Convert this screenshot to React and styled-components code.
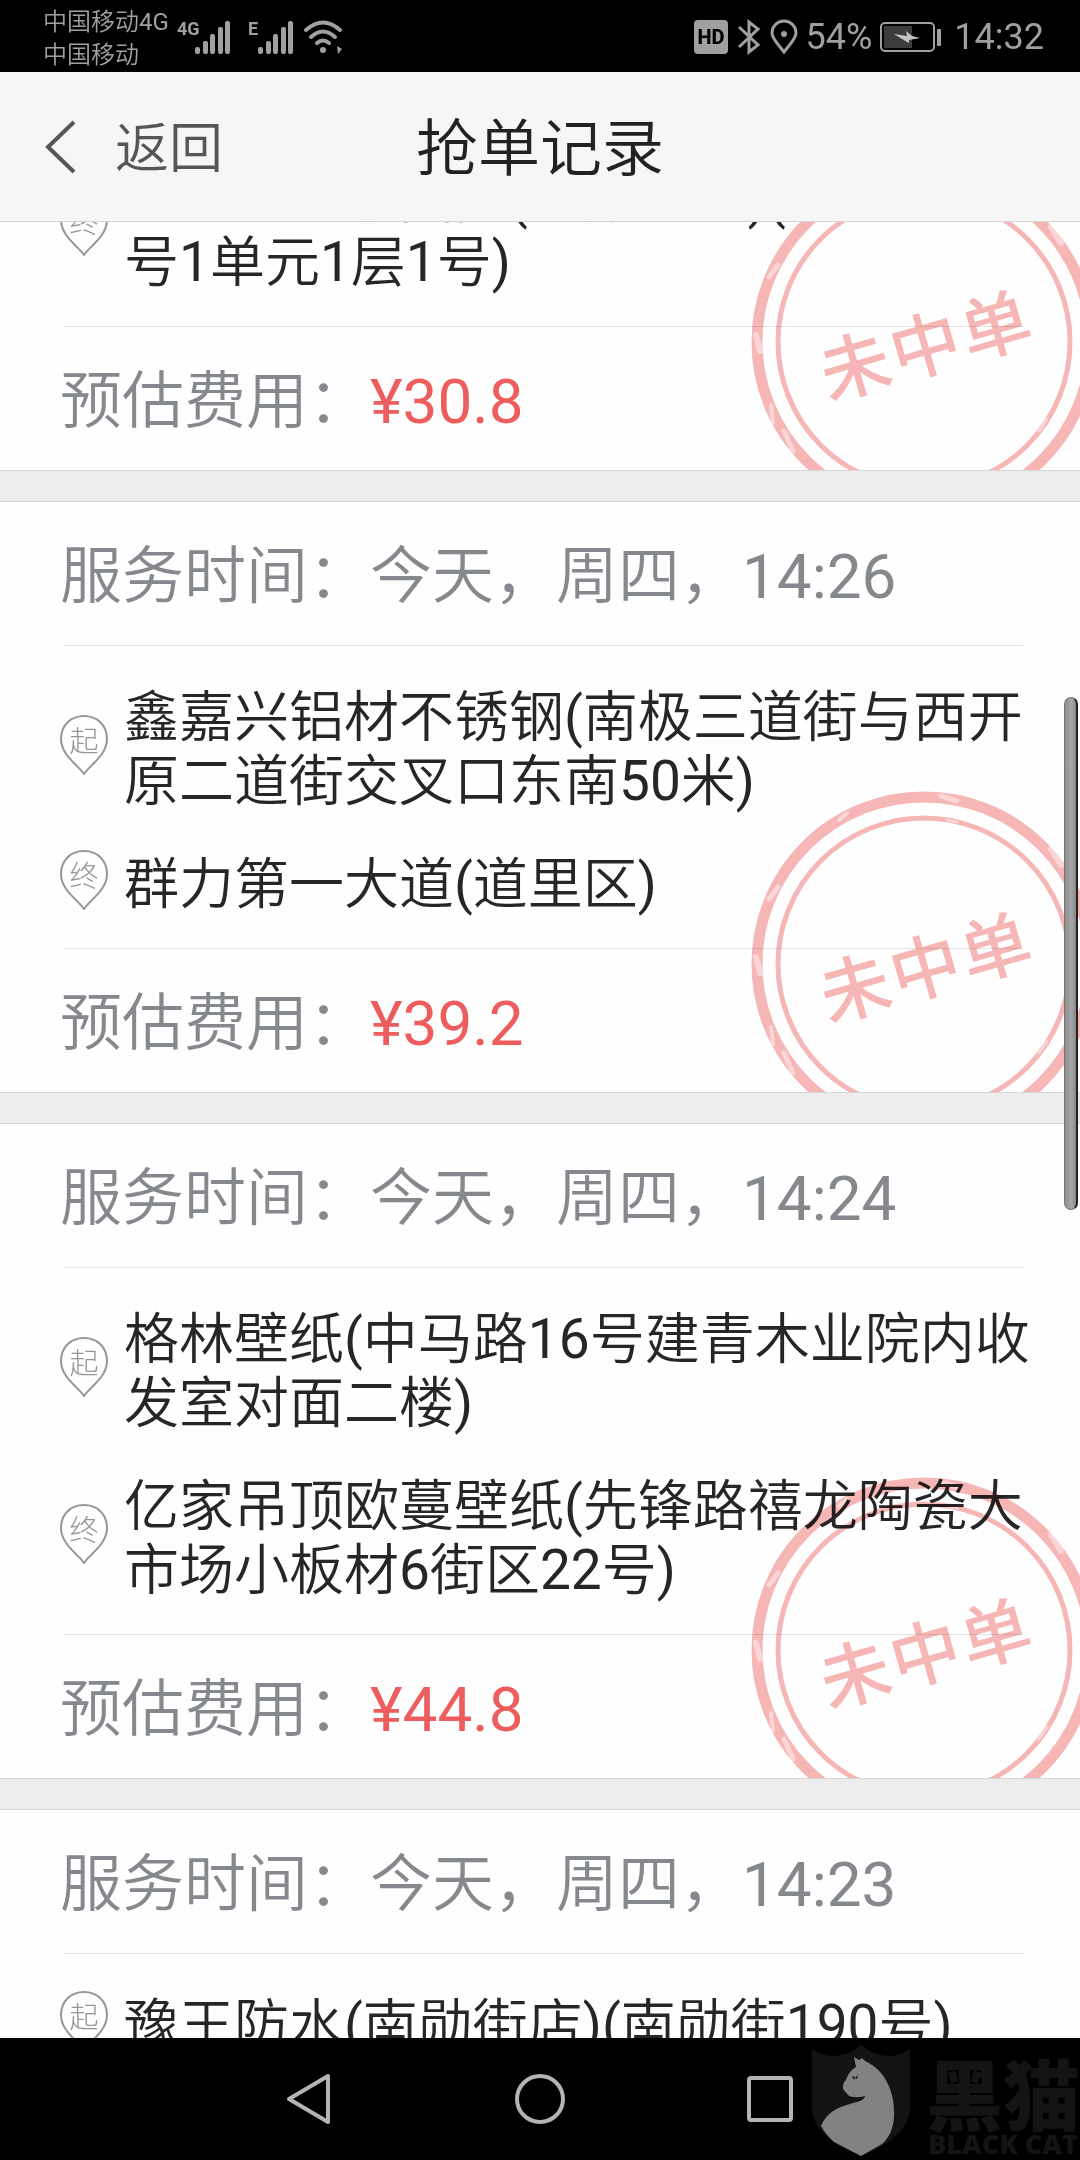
import React from 'react';
import styled, { createGlobalStyle, css } from 'styled-components';

const GlobalStyle = createGlobalStyle`
* { box-sizing: border-box; }
body {
  margin: 0;
  background: #000;
  font-family: Roboto, "Noto Sans CJK SC DemiLight", "Noto Sans CJK SC", sans-serif;
}
button {
  padding: 0;
  border: 0;
  background: none;
  font: inherit;
  color: inherit;
}
p, h1, ul { margin: 0; padding: 0; font-weight: 400; }
svg { display: block; flex: none; }
`

const Screen = styled.div`
display: flex;
flex-direction: column;
height: 100vh;
overflow: hidden;
position: relative;
`

// 顶部状态栏
const StatusBar = styled.div`
display: flex;
justify-content: space-between;
align-items: center;
flex: none;
height: 72px;
padding: 2px 36px 0 43px;
background: #000;
color: #a0a0a0;
`

const StatusGroup = styled.div`
display: flex;
align-items: center;
gap: 8px;
`

const Carrier = styled.div`
padding-top: 3px;
font-size: 24px;
line-height: 33px;
`

const StatusText = styled.span`
font-size: 36px;
line-height: 40px;
`

// 标题栏
const TopBar = styled.header`
display: grid;
grid-template-columns: 1fr auto 1fr;
align-items: center;
flex: none;
height: 150px;
padding: 0 45px;
background: #f6f6f6;
border-bottom: 1px solid #d4d4d4;
`

const BackButton = styled.button`
display: flex;
align-items: center;
gap: 39px;
font-size: 54px;
line-height: 64px;
color: #54565a;
`

const BackLabel = styled.span`
padding-top: 6px;
`

const Title = styled.h1`
padding-top: 6px;
font-size: 62px;
line-height: 72px;
color: #222;
`

// 订单列表
const List = styled.ul`
display: flex;
flex-direction: column;
gap: 30px;
flex: 1;
min-height: 0;
overflow: hidden;
list-style: none;
background: #ededed;
`

const Card = styled.li`
position: relative;
flex: none;
overflow: hidden;
background: #fefefe;
border-top: 1px solid #d6d6d6;
border-bottom: 1px solid #d6d6d6;
${(props) => props.$scrolled && css`
margin-top: -96px;
`}
${(props) => props.$last && css`
flex: 1 0 auto;
border-bottom: 0;
`}
`

const Field = styled.p`
display: flex;
align-items: center;
height: 143px;
padding: 6px 0 0 60px;
font-size: 62px;
line-height: 72px;
color: #85888d;
`

const Price = styled.strong`
font-weight: 400;
color: #ee5d5d;
`

const Route = styled.div`
display: flex;
flex-direction: column;
gap: 39px;
margin: 0 57px 0 63px;
padding: 39px 0 32px;
border-top: ${(props) => (props.$open ? 0 : 1)}px solid #e2e2e2;
border-bottom: ${(props) => (props.$last ? 0 : 1)}px solid #e2e2e2;
`

const Stop = styled.div`
display: flex;
align-items: center;
gap: 16px;
margin: 0 -17px 0 -3px;
font-size: 55px;
line-height: 64px;
color: #262626;
`

const PinIcon = styled.svg`
width: 48px;
height: 60px;
margin: -4px 0 4px;
`

const StampBox = styled.div`
position: absolute;
right: -17px;
bottom: -45px;
width: 346px;
height: 346px;
mix-blend-mode: multiply;
`

const StampRing = styled.svg`
position: absolute;
inset: 0;
`

const StampText = styled.div`
display: flex;
align-items: center;
justify-content: center;
gap: 3px;
height: 100%;
font-family: "Noto Sans CJK SC", sans-serif;
font-size: 70px;
font-weight: 500;
line-height: 70px;
color: #f7b7b7;
transform: rotate(-16deg);
`

const ScrollThumb = styled.div`
position: absolute;
top: 697px;
right: 2px;
width: 14px;
height: 513px;
border: solid #222;
border-width: 1px 2px 1px 1px;
border-color: #777 #222 #777 #777;
border-radius: 7px;
background: linear-gradient(90deg, #8f8f8f, #a8a8a8 60%, #858585);
`

// 底部导航键
const NavBar = styled.nav`
display: flex;
align-items: center;
justify-content: center;
gap: 178px;
flex: none;
height: 122px;
background: #000;
`

const Watermark = styled.div`
position: absolute;
right: 0;
bottom: 0;
display: flex;
align-items: flex-end;
gap: 16px;
padding-bottom: 3px;
color: #141414;
`

const WatermarkText = styled.div`
display: flex;
flex-direction: column;
align-items: center;
`

const WatermarkName = styled.span`
font-family: "Noto Sans CJK SC", sans-serif;
font-size: 77px;
font-weight: 900;
line-height: 76px;
`

const WatermarkSub = styled.span`
font-family: "Open Sans", sans-serif;
font-size: 27px;
font-weight: 800;
line-height: 27px;
`

const Signal = ({ label }) => (
  <svg width="55" height="36" viewBox="0 0 55 36" fill="#a0a0a0">
    <text x={label === 'E' ? 8 : 0} y="16" fontSize="18" fontWeight="700" fontFamily="Roboto">{label}</text>
    <rect x="18" y="28" width="5" height="7" rx="2" />
    <rect x="26" y="22" width="5" height="13" rx="2" />
    <rect x="33" y="15" width="5" height="20" rx="2" />
    <rect x="41" y="8" width="5" height="27" rx="2" />
    <rect x="48" y="2" width="5" height="33" rx="2" />
  </svg>
)

const Wifi = () => (
  <svg width="40" height="34" viewBox="0 0 40 34" fill="none" stroke="#a0a0a0" strokeWidth="4" strokeLinecap="round">
    <path d="M3 10 Q20 -5 37 10" />
    <path d="M8 17 Q20 6 32 17" />
    <path d="M14 23 Q20 18 26 23" />
    <circle cx="20" cy="30" r="3" fill="#a0a0a0" stroke="none" />
    <path d="M34 26 l5 3 -4 5 z" fill="#a0a0a0" stroke="none" />
  </svg>
)

const Hd = () => (
  <svg width="34" height="34" viewBox="0 0 34 34">
    <rect width="34" height="34" rx="4" fill="#a0a0a0" />
    <text x="17" y="24" textAnchor="middle" fontSize="20" fontWeight="800" fontFamily="Roboto" fill="#000">HD</text>
  </svg>
)

const Bluetooth = () => (
  <svg width="26" height="36" viewBox="0 0 26 36" fill="none" stroke="#a0a0a0" strokeWidth="3">
    <path d="M3 8 L22 26 L13 33 V3 L22 10 L3 28" />
  </svg>
)

const Location = () => (
  <svg width="28" height="36" viewBox="0 0 28 36" fill="none" stroke="#a0a0a0" strokeWidth="3">
    <path d="M14 33 C9 26 2 20 2 14 A12 12 0 0 1 26 14 C26 20 19 26 14 33 Z" />
    <circle cx="14" cy="15" r="3" fill="#a0a0a0" stroke="none" />
  </svg>
)

const Battery = () => (
  <svg width="66" height="30" viewBox="0 0 66 30">
    <rect x="1" y="1" width="53" height="28" rx="4" fill="none" stroke="#a0a0a0" strokeWidth="2" />
    <rect x="4" y="4" width="28" height="22" fill="#3d3d3d" />
    <path d="M14 12 L27 14 L26 9 L32 14 L40 16 L29 18 L29 21 L22 17 Z" fill="#c4c4c4" />
    <rect x="57" y="7" width="4" height="17" rx="1" fill="#a0a0a0" />
  </svg>
)

const Pin = ({ label }) => (
  <PinIcon viewBox="0 0 48 60" fill="none">
    <path d="M24 59 C18 50 1 40 1 24 C1 10 11 1 24 1 C37 1 47 10 47 24 C47 40 30 50 24 59 Z" stroke="#93969a" strokeWidth="2" />
    <text x="24" y="37" textAnchor="middle" fontSize="29" fontWeight="300" fontFamily="Noto Sans CJK SC" fill="#93969a">{label}</text>
  </PinIcon>
)

const Stamp = () => (
  <StampBox>
    <StampRing viewBox="0 0 346 346" fill="none">
      <circle cx="173" cy="173" r="167" stroke="#f7b7b7" strokeWidth="11" />
      <circle cx="173" cy="173" r="146" stroke="#f7b7b7" strokeWidth="5" />
      <g stroke="#fff" strokeOpacity="0.45" strokeLinecap="round">
        <path d="M18 108 L27 96" strokeWidth="5" />
        <path d="M5 166 L9 182" strokeWidth="6" />
        <path d="M20 236 L22 254" strokeWidth="4" />
        <path d="M33 262 L42 282" strokeWidth="5" />
        <path d="M88 29 L96 22" strokeWidth="4" />
        <path d="M190 5 L206 10" strokeWidth="5" />
        <path d="M300 58 L310 74" strokeWidth="6" />
        <path d="M196 29 L206 31" strokeWidth="3" />
        <path d="M288 262 L296 250" strokeWidth="3" />
      </g>
    </StampRing>
    <StampText><span>未</span><span>中</span><span>单</span></StampText>
  </StampBox>
)

const Cat = () => (
  <svg width="98" height="112" viewBox="0 0 98 112">
    <path d="M0 4 Q24 20 49 0 Q74 20 98 4 V62 Q98 92 49 111 Q0 92 0 62 Z" fill="#141212" />
    <path d="M42 12 L47 15 L50 13 L53 16 C72 24 83 46 82 70 C82 84 76 94 70 99 L49 111 L22 97 C16 92 12 86 9 81 C16 64 32 61 41 58 C49 56 53 54 53 51 C46 53 40 52 37 51 L31 44 C31 40 31 38 34 35 C36 29 39 25 44 22 Z" fill="#828282" />
    <path d="M40 31 l3 1 -1 3 z M43 33 l3 -3 -1 4 z" fill="#141212" />
  </svg>
)

const orders = [
  {
    price: '30.8',
    stops: [['终', '道外区南极国际(三期住宅)(南直路六号1单元1层1号)']],
  },
  {
    time: '14:26',
    price: '39.2',
    stops: [
      ['起', '鑫嘉兴铝材不锈钢(南极三道街与西开原二道街交叉口东南50米)'],
      ['终', '群力第一大道(道里区)'],
    ],
  },
  {
    time: '14:24',
    price: '44.8',
    stops: [
      ['起', '格林壁纸(中马路16号建青木业院内收发室对面二楼)'],
      ['终', '亿家吊顶欧蔓壁纸(先锋路禧龙陶瓷大市场小板材6街区22号)'],
    ],
  },
  {
    time: '14:23',
    stops: [['起', '豫王防水(南勋街店)(南勋街190号)']],
  },
]

const Order = ({ time, price, stops }) => (
  <Card $scrolled={!time} $last={!price}>
    {time && <Field>服务时间：今天，周四，{time}</Field>}
    <Route $open={!time} $last={!price}>
      {stops.map(([kind, place]) => (
        <Stop key={kind}>
          <Pin label={kind} />
          <p>{place}</p>
        </Stop>
      ))}
    </Route>
    {price && <Field>预估费用：<Price>¥{price}</Price></Field>}
    {price && <Stamp />}
  </Card>
)

const App = () => {

  return (
    <Screen>
      <GlobalStyle />
      <StatusBar>
        <StatusGroup>
          <Carrier>
            <div>中国移动4G</div>
            <div>中国移动</div>
          </Carrier>
          <Signal label="4G" />
          <Signal label="E" />
          <Wifi />
        </StatusGroup>
        <StatusGroup>
          <Hd />
          <Bluetooth />
          <Location />
          <StatusText>54%</StatusText>
          <Battery />
          <StatusText>14:32</StatusText>
        </StatusGroup>
      </StatusBar>

      <TopBar>
        <BackButton type="button">
          <svg width="31" height="54" viewBox="0 0 31 54" fill="none" stroke="#54565a" strokeWidth="4">
            <path d="M29 2 L3 27 L29 52" />
          </svg>
          <BackLabel>返回</BackLabel>
        </BackButton>
        <Title>抢单记录</Title>
      </TopBar>

      <List>
        {orders.map((order) => (
          <Order key={order.time || 'first'} {...order} />
        ))}
      </List>

      <ScrollThumb />

      <NavBar>
        <button type="button" aria-label="返回">
          <svg width="52" height="52" viewBox="0 0 52 52" fill="none" stroke="#b4b4b4" strokeWidth="4" strokeLinejoin="round">
            <path d="M44 3 V49 L5 26 Z" />
          </svg>
        </button>
        <button type="button" aria-label="主页">
          <svg width="52" height="52" viewBox="0 0 52 52" fill="none" stroke="#b4b4b4" strokeWidth="4">
            <circle cx="26" cy="26" r="23" />
          </svg>
        </button>
        <button type="button" aria-label="最近任务">
          <svg width="52" height="52" viewBox="0 0 52 52" fill="none" stroke="#b4b4b4" strokeWidth="4">
            <rect x="5" y="5" width="42" height="42" rx="2" />
          </svg>
        </button>
      </NavBar>

      <Watermark>
        <Cat />
        <WatermarkText>
          <WatermarkName>黑猫</WatermarkName>
          <WatermarkSub>BLACK CAT</WatermarkSub>
        </WatermarkText>
      </Watermark>
    </Screen>
  );
};

export default App;
